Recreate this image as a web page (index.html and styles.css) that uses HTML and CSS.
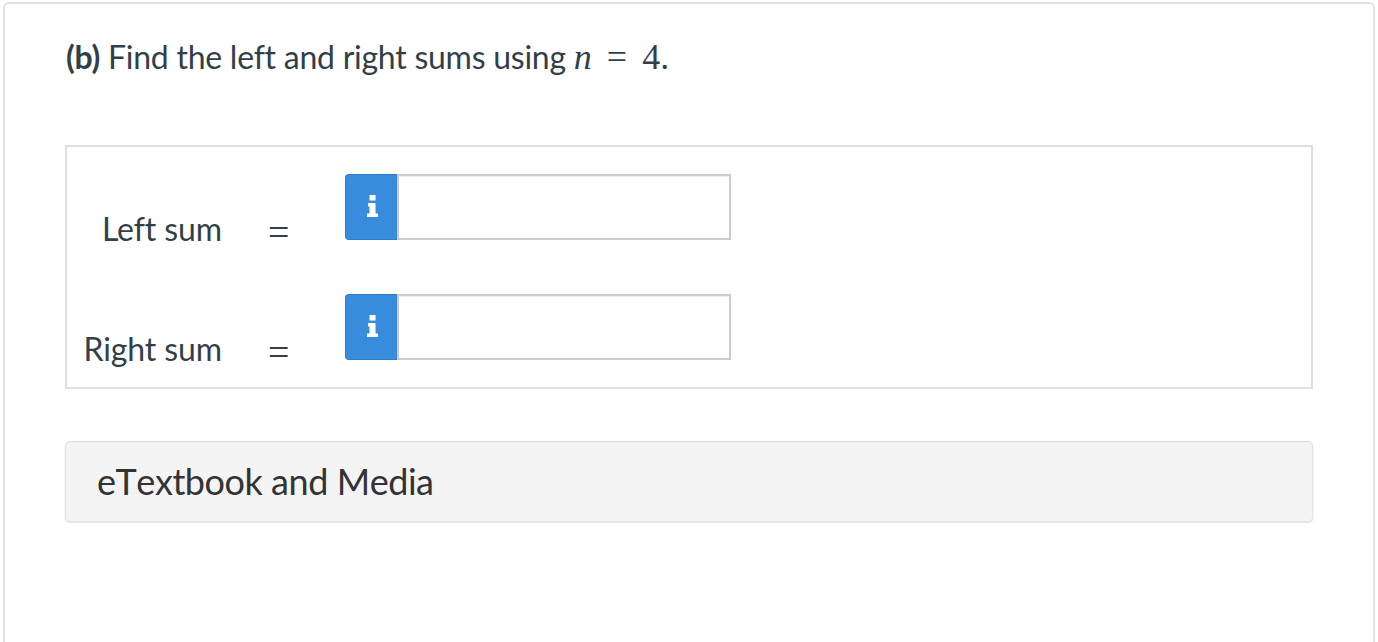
FILE: index.html
```html
<!DOCTYPE html>
<html lang="en">
<head>
    <meta charset="UTF-8">
    <meta name="viewport" content="width=device-width, initial-scale=1.0">
    <title>Left and right sums</title>
    <link rel="stylesheet" href="styles.css">
</head>
<body>

<div class="card">
    <p class="question"><b>(b)</b> Find the left and right sums using <span class="math"><i>n</i><span class="mathEq">=</span>4.</span></p>

    <div class="answerBox">
        <div class="answerRow">
            <span class="answerLabel">Left sum</span>
            <span class="answerEq">=</span>
            <div class="inputGroup">
                <button class="infoButton" type="button">
                    <svg width="11" height="22" viewBox="0 0 11 22"><path d="M2.500 0h6v5.500h-6zM1 8h7.500v10.500H11V22H0v-3.500h2.500V11.500H1z" fill="#fff"/></svg>
                </button>
                <input class="answerInput" type="text">
            </div>
        </div>
        <div class="answerRow">
            <span class="answerLabel">Right sum</span>
            <span class="answerEq">=</span>
            <div class="inputGroup">
                <button class="infoButton" type="button">
                    <svg width="11" height="22" viewBox="0 0 11 22"><path d="M2.500 0h6v5.500h-6zM1 8h7.500v10.500H11V22H0v-3.500h2.500V11.500H1z" fill="#fff"/></svg>
                </button>
                <input class="answerInput" type="text">
            </div>
        </div>
    </div>

    <div class="mediaPanel">eTextbook and Media</div>
</div>

</body>
</html>
```

FILE: styles.css
```css
html, body {
    height: 100%;
}

body {
    margin: 0;
    overflow: hidden;
    background: #fff;
    font-family: Lato, Arial, sans-serif;
    color: #333f48;
}

.card {
    box-sizing: border-box;
    height: 640px;
    margin: 2px 3px 0 3px;
    padding: 31px 60px 0 60px;
    border: 2px solid #e2e2e2;
    border-bottom: none;
    border-radius: 6px 6px 0 0;
}

.question {
    margin: 0 0 0 1px;
    font-size: 32px;
    line-height: 44px;
    letter-spacing: -0.25px;
}

.math {
    font-family: "Liberation Serif", serif;
    font-size: 36px;
    letter-spacing: 0;
}

.mathEq {
    margin: 0 15px;
}

.answerBox {
    box-sizing: border-box;
    display: flex;
    flex-direction: column;
    gap: 54px;
    height: 244px;
    margin-top: 66px;
    padding: 27px 0 0 0;
    border: 2px solid #dfdfdf;
}

.answerRow {
    display: flex;
    height: 66px;
}

.answerLabel {
    box-sizing: border-box;
    width: 155px;
    padding-top: 35px;
    font-size: 32px;
    line-height: 40px;
    letter-spacing: -0.1px;
    text-align: right;
}

.answerEq {
    width: 46px;
    margin-left: 46px;
    padding-top: 38px;
    font-family: "Liberation Serif", serif;
    font-size: 38px;
    line-height: 40px;
}

.inputGroup {
    display: flex;
    width: 386px;
    margin-left: 31px;
}

.infoButton {
    display: flex;
    align-items: center;
    justify-content: center;
    width: 52px;
    padding: 0 0 2px 1px;
    background: #388cdc;
    border: 1px solid #2f7cc4;
    border-right: none;
    border-radius: 4px 0 0 4px;
}

.answerInput {
    box-sizing: border-box;
    flex: 1;
    min-width: 0;
    border: 2px solid #ccc;
    background: #fff;
    box-shadow: inset 0 1px 1px rgba(0, 0, 0, 0.075);
}

.mediaPanel {
    box-sizing: border-box;
    height: 81px;
    margin-top: 52px;
    padding-left: 31px;
    background: #f4f4f4;
    border: 1px solid #e4e4e4;
    border-top-color: #dedede;
    border-radius: 5px;
    box-shadow: 0 1px 2px rgba(0, 0, 0, 0.12);
    font-size: 36px;
    font-kerning: none;
    letter-spacing: -0.45px;
    line-height: 79px;
    color: #333;
}
```
